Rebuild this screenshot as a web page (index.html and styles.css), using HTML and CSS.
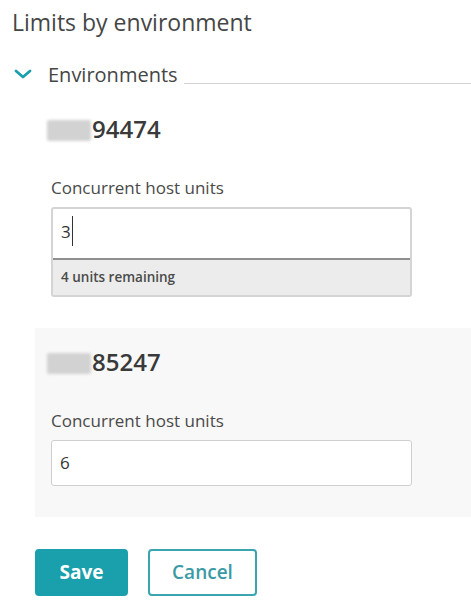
FILE: index.html
```html
<!DOCTYPE html>
<html lang="en">
<head>
<meta charset="utf-8">
<title>Limits by environment</title>
<link rel="stylesheet" href="styles.css">
</head>
<body>
<div class="page">
  <h1 class="title">Limits by environment</h1>
  <div class="section-header">
    <svg class="chevron" width="18" height="10" viewBox="0 0 18 10" aria-hidden="true">
      <polyline points="2,2 9,8 16,2" fill="none" stroke="#1a9fad" stroke-width="2.8" stroke-linecap="round" stroke-linejoin="round"/>
    </svg>
    <span class="section-name">Environments</span>
    <div class="rule"></div>
  </div>
  <div class="env-list">
    <div class="env">
      <div class="env-id"><span class="masked"></span>94474</div>
      <div class="label">Concurrent host units</div>
      <div class="field field-focused">
        <div class="field-input">3<span class="caret"></span></div>
        <div class="field-help">4 units remaining</div>
      </div>
    </div>
    <div class="env env-alt">
      <div class="env-id"><span class="masked"></span>85247</div>
      <div class="label">Concurrent host units</div>
      <div class="field">
        <div class="field-input">6</div>
      </div>
    </div>
  </div>
  <div class="actions">
    <button class="btn btn-primary" type="button">Save</button>
    <button class="btn btn-secondary" type="button">Cancel</button>
  </div>
</div>
</body>
</html>
```

FILE: styles.css
```css
html, body {
  margin: 0;
  padding: 0;
  background: #ffffff;
}

body {
  font-family: "Open Sans", "DejaVu Sans", sans-serif;
  color: #454646;
}

.page {
  padding: 7px 0 0 12px;
}

.title {
  margin: 0;
  font-size: 23px;
  line-height: 30px;
  font-weight: 400;
  color: #454646;
}

.section-header {
  display: flex;
  align-items: center;
  height: 26px;
  margin-top: 25px;
  margin-bottom: 7px;
}

.chevron {
  margin-left: 2px;
  margin-right: 16px;
  margin-top: -3px;
  flex: none;
}

.section-name {
  font-size: 20px;
  line-height: 26px;
  color: #454646;
}

.rule {
  flex: 1;
  height: 1px;
  background: #d2d2d2;
  align-self: flex-end;
  margin-left: 6px;
  margin-bottom: 4px;
}

.env-list {
  margin-left: 23px;
}

.env {
  padding: 19px 16px 31px 16px;
}

.env-alt {
  background: #f8f8f8;
}

.env-id {
  font-size: 24px;
  line-height: 30px;
  font-weight: 600;
  color: #3a3a3a;
}

.masked {
  display: inline-block;
  width: 44px;
  height: 21px;
  margin-left: -4px;
  margin-right: 1px;
  vertical-align: -3px;
  background: #d2d2d2;
  border-radius: 2px;
  filter: blur(1.5px);
}

.label {
  margin-top: 33px;
  margin-bottom: 8px;
  font-size: 17px;
  line-height: 22px;
  color: #4a4a4a;
}

.field {
  width: 361px;
  box-sizing: border-box;
  border: 1px solid #cfcfcf;
  border-radius: 3px;
  background: #ffffff;
  overflow: hidden;
}

.field-input {
  height: 44px;
  padding-left: 8px;
  font-size: 17px;
  line-height: 44px;
  color: #333333;
}

.field-focused {
  border: 2px solid #d4d4d4;
}

.field-focused .field-input {
  height: 49px;
  line-height: 45px;
  box-sizing: border-box;
  padding-bottom: 4px;
}

.caret {
  display: inline-block;
  width: 1px;
  height: 30px;
  background: #333333;
  margin-left: 1px;
  vertical-align: middle;
  position: relative;
  top: -2px;
}

.field-help {
  height: 35px;
  border-top: 2px solid #8f8f8f;
  background: #ececec;
  padding-left: 8px;
  font-size: 13.5px;
  line-height: 35px;
  font-weight: 600;
  color: #4a4a4a;
}

.actions {
  display: flex;
  gap: 20px;
  margin-left: 23px;
  margin-top: 32px;
}

.btn {
  height: 47px;
  box-sizing: border-box;
  border-radius: 4px;
  font-family: "Open Sans", "DejaVu Sans", sans-serif;
  font-size: 19px;
  line-height: 1;
  cursor: pointer;
  padding: 0;
}

.btn-primary {
  width: 93px;
  background: #1a9fad;
  border: 2px solid #1a9fad;
  color: #ffffff;
  font-weight: 700;
}

.btn-secondary {
  width: 109px;
  background: #ffffff;
  border: 2px solid #3aa5b0;
  color: #3b9aa5;
  font-weight: 600;
}
```
